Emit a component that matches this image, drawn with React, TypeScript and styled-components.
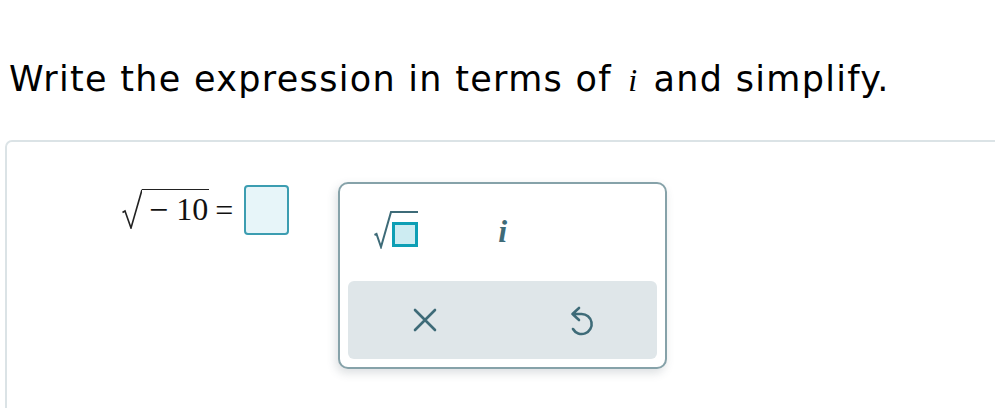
import React from 'react'
import styled, { createGlobalStyle } from 'styled-components'

const GlobalStyle = createGlobalStyle`
  html, body {
    margin: 0;
    padding: 0;
    background: #ffffff;
    overflow: hidden;
  }
`

const Page = styled.div`
  width: 995px;
  height: 408px;
  overflow: hidden;
  display: flex;
  flex-direction: column;
`

const Title = styled.h1`
  margin: 0;
  padding: 59px 0 0 9px;
  font-family: 'DejaVu Sans', Verdana, sans-serif;
  font-weight: normal;
  font-size: 35px;
  line-height: 41px;
  letter-spacing: 1.3px;
  color: #000;
  flex-shrink: 0;
  white-space: nowrap;
`

const MathVar = styled.span`
  font-family: 'Liberation Serif', 'Times New Roman', serif;
  font-style: italic;
  font-size: 32px;
  letter-spacing: 0;
  padding: 0 4px 0 4px;
`

const Panel = styled.section`
  flex-shrink: 0;
  margin: 39px 0 0 5px;
  width: 1010px;
  height: 300px;
  border: 2px solid #dbe3e6;
  border-radius: 7px 0 0 0;
  padding: 40px 0 0 115px;
  display: flex;
  align-items: flex-start;
`

const Equation = styled.div`
  margin-top: 3px;
  height: 50px;
  display: flex;
  align-items: center;
  font-family: 'Liberation Serif', 'Times New Roman', serif;
  font-size: 32px;
  color: #111;
`

const Radical = styled.div`
  display: flex;
  height: 40px;
  margin-top: -3px;
`

const Radicand = styled.span`
  border-top: 1.5px solid #222;
  padding: 0 1px 0 7px;
  line-height: 39px;
  display: flex;
  align-items: center;
`

const Minus = styled.span`
  font-size: 34px;
  margin-right: 8px;
`

const Equals = styled.span`
  margin: 0 11px 0 6px;
`

const AnswerBox = styled.div`
  width: 45px;
  height: 50px;
  box-sizing: border-box;
  border: 2px solid #3c9db1;
  border-radius: 4px;
  background: #e7f5f9;
`

const Keypad = styled.div`
  margin-left: 49px;
  width: 329px;
  height: 187px;
  box-sizing: border-box;
  border: 2px solid #86a2a9;
  border-radius: 10px;
  background: #fff;
  box-shadow: -2px 4px 10px rgba(60, 80, 90, 0.18);
  padding: 8px;
  display: flex;
  flex-direction: column;
  gap: 13px;
`

const KeyRow = styled.div<{ $cols: number }>`
  display: grid;
  grid-template-columns: repeat(${(p) => p.$cols}, 1fr);
`

const TopRow = styled(KeyRow)`
  height: 76px;
`

const ActionRow = styled(KeyRow)`
  height: 78px;
  background: #dfe6e9;
  border-radius: 6px;
`

const Key = styled.button<{ $shift?: number }>`
  border: none;
  background: transparent;
  padding: 0;
  display: flex;
  align-items: center;
  justify-content: center;
  color: #3e6b78;
  margin-right: ${(p) => p.$shift || 0}px;
`

const ImagUnit = styled.span`
  font-family: 'Liberation Serif', 'Times New Roman', serif;
  font-style: italic;
  font-weight: bold;
  font-size: 32px;
  color: #3e6b78;
  margin-top: 2px;
`

function RadicalSign() {
  return (
    <svg width="20" height="40" viewBox="0 0 20 40">
      <path
        d="M0.5 23.5 L3 22 L9 39 L20 0.75"
        fill="none"
        stroke="#222"
        strokeWidth="1.6"
        strokeLinejoin="miter"
      />
    </svg>
  )
}

function SqrtKeyIcon() {
  return (
    <svg width="44" height="38" viewBox="0 0 44 38">
      <path
        d="M0.5 24 L2.5 23 L7 36 L17 1 H44"
        fill="none"
        stroke="#3e6b78"
        strokeWidth="2"
      />
      <rect x="19.5" y="12.5" width="23" height="22" fill="#cdecf2" stroke="#0e9fb5" strokeWidth="3" />
    </svg>
  )
}

function ClearIcon() {
  return (
    <svg width="24" height="24" viewBox="0 0 24 24">
      <path d="M2 2 L22 22 M22 2 L2 22" stroke="#3e6b78" strokeWidth="2.6" strokeLinecap="round" />
    </svg>
  )
}

function UndoIcon() {
  return (
    <svg width="28" height="34" viewBox="0 0 28 34">
      <path
        d="M13 5 L6.5 11 L13 17 M6.5 11 H15.5 A10 10 0 1 1 7 26"
        fill="none"
        stroke="#3e6b78"
        strokeWidth="2.6"
        strokeLinecap="round"
        strokeLinejoin="round"
      />
    </svg>
  )
}

export default function App() {
  return (
    <Page>
      <GlobalStyle />
      <Title>
        Write the expression in terms of <MathVar>i</MathVar> and simplify.
      </Title>
      <Panel>
        <Equation>
          <Radical>
            <RadicalSign />
            <Radicand>
              <Minus>−</Minus>10
            </Radicand>
          </Radical>
          <Equals>=</Equals>
          <AnswerBox />
        </Equation>
        <Keypad>
          <TopRow $cols={3}>
            <Key $shift={8} aria-label="square root">
              <SqrtKeyIcon />
            </Key>
            <Key aria-label="imaginary unit">
              <ImagUnit>i</ImagUnit>
            </Key>
            <Key aria-hidden tabIndex={-1} />
          </TopRow>
          <ActionRow $cols={2}>
            <Key aria-label="clear">
              <ClearIcon />
            </Key>
            <Key aria-label="undo">
              <UndoIcon />
            </Key>
          </ActionRow>
        </Keypad>
      </Panel>
    </Page>
  )
}
